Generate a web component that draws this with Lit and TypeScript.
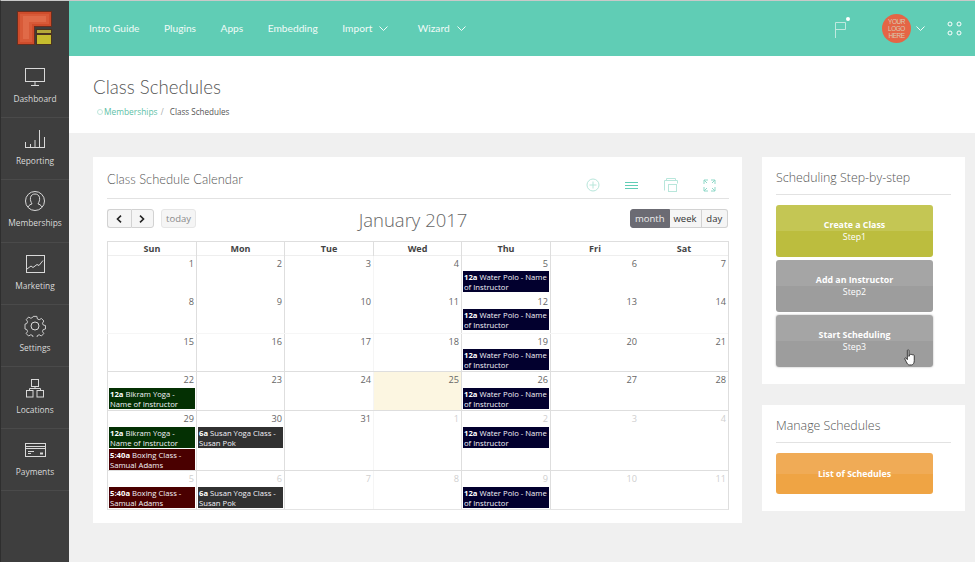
import { LitElement, html, css, svg } from "lit";
import { customElement } from "lit/decorators.js";

type Ev = { t: string; name: string; c: string };
const W: Ev = { t: "12a", name: "Water Polo - Name of Instructor", c: "navy" };
const Y: Ev = { t: "12a", name: "Bikram Yoga - Name of Instructor", c: "green" };
const B: Ev = { t: "5:40a", name: "Boxing Class - Samual Adams", c: "maroon" };
const S: Ev = { t: "6a", name: "Susan Yoga Class - Susan Pok", c: "char" };

type Cell = { d: number; off?: boolean; now?: boolean; ev?: Ev[] };
const c = (d: number, ev?: Ev[], off?: boolean, now?: boolean): Cell => ({ d, ev, off, now });

const WEEKS: { kind: string; cells: Cell[] }[] = [
  { kind: "plain", cells: [c(1), c(2), c(3), c(4), c(5, [W]), c(6), c(7)] },
  { kind: "plain", cells: [c(8), c(9), c(10), c(11), c(12, [W]), c(13), c(14)] },
  { kind: "plain faint", cells: [c(15), c(16), c(17), c(18), c(19, [W]), c(20), c(21)] },
  { kind: "line", cells: [c(22, [Y]), c(23), c(24), c(25, undefined, false, true), c(26, [W]), c(27), c(28)] },
  { kind: "line tall", cells: [c(29, [Y, B]), c(30, [S]), c(31), c(1, undefined, true), c(2, [W], true), c(3, undefined, true), c(4, undefined, true)] },
  { kind: "line", cells: [c(5, [B], true), c(6, [S], true), c(7, undefined, true), c(8, undefined, true), c(9, [W], true), c(10, undefined, true), c(11, undefined, true)] },
];

const ic = (w: number, h: number, body: unknown) =>
  html`<svg width=${w} height=${h} viewBox="0 0 ${w} ${h}" fill="none" stroke="currentColor" stroke-width="1">${body}</svg>`;

const NAV = [
  { label: "Dashboard", icon: ic(22, 20, svg`<rect x="1.500" y="1.500" width="19" height="13"/><path d="M11 14.500v3.500M7 18.500h8"/>`) },
  { label: "Reporting", icon: ic(22, 20, svg`<path d="M1.500 13v6M6.500 15v4M11 11v8M15.500 1v18M20.500 8v11M1 18.500h20"/>`) },
  { label: "Memberships", icon: ic(22, 22, svg`<circle cx="11" cy="11" r="9.500"/><path d="M8 14c-1-2-2-4-1.500-6.500C7 5 9 4 11 4s4 1 4.500 3.500C16 10 15 12 14 14M4 17c1-2 3-3 4-3M18 17c-1-2-3-3-4-3"/>`) },
  { label: "Marketing", icon: ic(22, 20, svg`<rect x="2.500" y="1.500" width="18" height="17"/><path d="M3 15l4-3 2 1.500 4-3 2 1 4-5"/>`) },
  { label: "Settings", icon: ic(22, 22, svg`<path d="M9 1.500h4l.6 2.800 2 .9 2.500-1.400 2.600 2.800-1.500 2.400.8 2 2.500.6v3.800l-2.500.6-.8 2 1.400 2.400-2.600 2.700-2.400-1.400-2 .9-.6 2.600H9l-.6-2.600-2-.9-2.400 1.400-2.700-2.700 1.500-2.400-.8-2-2-.6V10l2-.6.8-2L1.400 5l2.600-2.800 2.400 1.400 2-.9z" transform="translate(1 0) scale(.91)"/><circle cx="11" cy="11" r="4"/>`) },
  { label: "Locations", icon: ic(20, 20, svg`<rect x="6.500" y="1.500" width="7" height="7"/><rect x="1.500" y="12.500" width="6.500" height="6.500"/><rect x="12" y="12.500" width="6.500" height="6.500"/><path d="M10 8.500v2M4.500 12.500v-2h11v2"/>`) },
  { label: "Payments", icon: ic(22, 16, svg`<rect x="1.500" y="1.500" width="20" height="13"/><path d="M2 4.500h19M2 6.500h19M4 9.500h6M4 11.500h3"/><path d="M16 11.500h3" stroke-width="2"/>`) },
];

const chev = html`<svg class="chev" width="9" height="5" viewBox="0 0 9 5" fill="none" stroke="currentColor"><path d="M.5.500l4 4 4-4"/></svg>`;

@customElement("app-root")
export class AppRoot extends LitElement {
  static styles = css`
    :host { display: block; width: 975px; height: 562px; overflow: hidden; background: #f0f0f0; font-family: "Open Sans", sans-serif; color: #555; }
    * { box-sizing: border-box; }
    .shell { display: flex; height: 562px; }
    .side { width: 69px; flex: none; background: #3e3e3e; border-left: 1px solid #2e2e2e; border-top: 1px solid #c9c9c9; color: #d9d9d9; display: flex; flex-direction: column; }
    .logoBox { height: 55px; display: flex; justify-content: center; align-items: flex-start; padding: 10px 1px 0 0; }
    .nitem { height: 62.200px; border-bottom: 1px solid #4a4a4a; display: flex; flex-direction: column; align-items: center; font-size: 8.400px; line-height: 12px; padding-top: 9px; }
    .nitem .ico { height: 24px; display: flex; align-items: center; justify-content: center; }
    .nitem .lab { margin-top: 4px; }
    .main { flex: 1; min-width: 0; display: flex; flex-direction: column; }
    .top { height: 56px; background: #60cdb5; border-top: 1px solid #c9c9c9; display: flex; align-items: center; color: #f1fbf8; font-family: Lato, sans-serif; font-size: 10.200px; padding-left: 20px; }
    .links { display: flex; gap: 24.500px; align-items: center; padding-bottom: 1px; }
    .links span { display: inline-flex; align-items: center; gap: 7px; }
    .links .w { margin-left: 5px; }
    .right { margin-left: auto; display: flex; align-items: center; padding-right: 13px; }
    .flag { position: relative; width: 16px; height: 20px; margin-right: 32px; }
    .dot { position: absolute; right: 0; top: -2px; width: 4px; height: 4px; border-radius: 50%; background: #fff; }
    .avatar { width: 29px; height: 29px; border-radius: 50%; background: #e56545; display: flex; align-items: center; justify-content: center; text-align: center; font-size: 6.500px; line-height: 7px; letter-spacing: -.5px; color: #d8c9b4; font-family: "Liberation Sans", sans-serif; margin-right: 5px; }
    .right .chev { margin-right: 22px; }
    .head { height: 77px; background: #fff; padding: 19px 24px 0; }
    h1 { margin: 0; font-family: Lato, sans-serif; font-weight: 300; font-size: 18.700px; line-height: 24px; color: #555; }
    .crumb { margin-top: 7px; font-size: 8.100px; line-height: 12px; display: flex; align-items: center; color: #555; }
    .crumb .m { color: #60bfa8; font-size: 8.400px; }
    .crumb .g { width: 6px; height: 6px; border-radius: 50%; border: 1px solid #bfe6dc; margin: 0 1px 0 4px; }
    .crumb .sep { color: #aaa; margin: 0 4px 0 1px; }
    .body { display: flex; padding: 24px 10px 0 24px; gap: 20px; align-items: flex-start; }
    .card { background: #fff; }
    .cal { width: 649px; height: 366px; padding: 0 13px 0 14px; }
    .calHead { height: 42px; display: flex; align-items: center; border-bottom: 1px solid #e2e2e2; padding-top: 5px; justify-content: space-between; color: #666; }
    .calHead .t { font-family: Lato, sans-serif; font-size: 12.900px; font-weight: 300; color: #555; position: relative; top: -1px; }
    .tools { display: flex; align-items: center; gap: 25.500px; padding-right: 13px; position: relative; top: 5px; }
    .bar { display: flex; align-items: flex-start; justify-content: space-between; height: 42px; padding: 10px 1px 0 0; }
    .grp { display: flex; align-items: center; }
    .btn { height: 19px; border: 1px solid #d2d2d2; background: #f5f5f5; font-size: 9.500px; color: #333; display: flex; align-items: center; justify-content: center; padding: 0 5px; }
    .arrow { width: 23.500px; font-weight: 700; color: #222; padding: 0; }
    .arrow.l { border-radius: 3px 0 0 3px; border-right: 0; }
    .arrow.r { border-radius: 0 3px 3px 0; margin-right: 7px; }
    .arrow svg { display: block; }
    .todayBtn { width: 35px; border-radius: 3px; color: #8a8a8a; border-color: #e6e6e6; }
    .title { font-family: "Open Sans", sans-serif; font-weight: 300; font-size: 18.500px; line-height: 22px; color: #666; }
    .v1 { width: 39.500px; background: #6b6b73; border-color: #6b6b73; color: #eee; border-radius: 3px 0 0 3px; }
    .v2 { width: 32px; border-left: 0; }
    .v3 { width: 26.500px; border-left: 0; border-radius: 0 3px 3px 0; }
    .cols { display: grid; grid-template-columns: 89px 88px 89px 88px 89px 89px 89px; }
    .table { width: 622px; border-top: 1px solid #dedede; border-right: 1px solid #dedede; border-bottom: 1px solid #e4e4e4; }
    .hdr { height: 14px; font-size: 9px; line-height: 14px; font-weight: 700; text-align: center; color: #444; border-bottom: 1px solid #eee; }
    .hdr div { border-left: 1px solid #dedede; }
    .hdr div:nth-child(7) { border-left-color: transparent; }
    .week { height: 38.400px; }
    .week.faint { border-top: 1px solid #f6f6f6; }
    .week.tall { height: 60px; }
    .week.line { height: 39px; border-top: 1px solid #dedede; }
    .week.line.tall { height: 60px; }
    .cell { border-left: 1px solid #dedede; min-width: 0; height: 100%; overflow: hidden; }
    .cell:nth-child(4) { border-left-color: #f5f5f5; }
    .cell:nth-child(7) { border-left-color: transparent; }
    .cell.now { background: #fcf6e1; }
    .num { text-align: right; font-size: 9.200px; line-height: 13px; padding: 1px 2px 0 0; color: #666; }
    .off .num { color: #cfcfcf; }
    .ev { margin: 1px 1px 0 1px; font-size: 7.700px; line-height: 10px; padding: 1px 1px 0; color: #f2f2f8; height: 21px; overflow: hidden; }
    .line .ev { margin-top: 2px; }
    .line .ev + .ev { margin-top: 1px; }
    .ev b { color: #fff; font-weight: 700; }
    .navy { background: #02002e; }
    .green { background: #043003; }
    .maroon { background: #4a0000; }
    .char { background: #313131; }
    .aside { display: flex; flex-direction: column; gap: 21px; width: 203px; }
    .steps { height: 227px; padding: 0 14px; }
    .manage { height: 106px; padding: 0 14px; }
    .ah { height: 38px; border-bottom: 1px solid #e2e2e2; font-weight: 300; font-size: 12.400px; color: #555; padding-top: 13px; line-height: 16px; white-space: nowrap; }
    .stack { display: flex; flex-direction: column; gap: 3px; padding-top: 10px; }
    .sbtn { width: 157px; height: 52px; border-radius: 3px; color: #fff; font-size: 8.800px; line-height: 11.500px; text-align: center; display: flex; flex-direction: column; padding-top: 15px; position: relative; }
    .sbtn b { font-weight: 700; }
    .sbtn.active { box-shadow: 0 0 2px rgba(0,0,0,.35); }
    .olive { background: linear-gradient(#c4c654 0 50%, #bcbd3e 50%); }
    .grey { background: linear-gradient(#a5a5a5 0 50%, #9d9d9d 50%); }
    .orange { background: linear-gradient(#f0ab56 0 50%, #efa444 50%); height: 41px; padding-top: 16px; }
    .hand { position: absolute; right: 17px; bottom: 1px; }
  `;

  render() {
    return html`<div class="shell">
      <nav class="side">
        <div class="logoBox">
          <svg width="35" height="34" viewBox="0 0 35 34">
            <path d="M0 0h35v16H18v18H0z" fill="#6a2e1e"/>
            <path d="M1 1h33v14H17v18H1z" fill="#cf4c2b"/>
            <path d="M3 3h29v10H15v18H3z" fill="#d85a38"/>
            <path d="M6 5h23v6H12v17H6z" fill="#e06a48"/>
            <rect x="19" y="18" width="16" height="16" fill="#4a3320"/>
            <rect x="20" y="19" width="14" height="3" fill="#b5a93a"/>
            <rect x="20" y="24" width="14" height="9" fill="#c6bd2e"/>
          </svg>
        </div>
        ${NAV.map((n) => html`<div class="nitem"><div class="ico">${n.icon}</div><div class="lab">${n.label}</div></div>`)}
      </nav>
      <div class="main">
        <header class="top">
          <div class="links">
            <span>Intro Guide</span><span>Plugins</span><span>Apps</span><span>Embedding</span>
            <span>Import ${chev}</span><span class="w">Wizard ${chev}</span>
          </div>
          <div class="right">
            <div class="flag">
              <svg width="14" height="20" viewBox="0 0 14 20" fill="none" stroke="#bfe9df"><path d="M1.500 19V3.500h10v7h-10"/></svg>
              <i class="dot"></i>
            </div>
            <div class="avatar">YOUR<br/>LOGO<br/>HERE</div>
            ${chev}
            <svg width="15" height="15" viewBox="0 0 15 15" fill="none" stroke="#fff"><circle cx="3" cy="3" r="2"/><circle cx="12" cy="3" r="2"/><circle cx="3" cy="12" r="2"/><circle cx="12" cy="12" r="2"/></svg>
          </div>
        </header>
        <section class="head">
          <h1>Class Schedules</h1>
          <div class="crumb"><i class="g"></i><span class="m">Memberships</span><span class="sep">&nbsp;/</span><span>&nbsp;Class Schedules</span></div>
        </section>
        <div class="body">
          <section class="card cal">
            <div class="calHead">
              <span class="t">Class Schedule Calendar</span>
              <div class="tools">
                <svg width="14" height="14" viewBox="0 0 14 14" fill="none" stroke="#b8e6db"><circle cx="7" cy="7" r="6"/><path d="M7 3.500v7M3.500 7h7"/></svg>
                <svg width="13" height="9" viewBox="0 0 13 9" fill="none" stroke="#60cdb5"><path d="M0 1.500h13M0 4.500h13M0 7.500h13"/></svg>
                <svg width="14" height="14" viewBox="0 0 14 14" fill="none" stroke="#b8e6db"><path d="M2.500 2.500v-2h9v2M.5 12.500v-10h13v3"/><rect x="4.500" y="6.500" width="8" height="7"/></svg>
                <svg width="13" height="13" viewBox="0 0 13 13" fill="none" stroke="#8fd8c8"><path d="M1 5V1h4M1 1l3 3M8 1h4v4M12 1L9 4M1 8v4h4M1 12l3-3M12 8v4H8M12 12L9 9"/></svg>
              </div>
            </div>
            <div class="bar">
              <div class="grp">
                <div class="btn arrow l"><svg width="6" height="8" viewBox="0 0 6 8" fill="none" stroke="#222" stroke-width="1.600"><path d="M5 .7L1.500 4 5 7.300"/></svg></div>
                <div class="btn arrow r"><svg width="6" height="8" viewBox="0 0 6 8" fill="none" stroke="#222" stroke-width="1.600"><path d="M1 .7L4.500 4 1 7.300"/></svg></div>
                <div class="btn todayBtn">today</div>
              </div>
              <div class="title">January 2017</div>
              <div class="grp">
                <div class="btn v1">month</div><div class="btn v2">week</div><div class="btn v3">day</div>
              </div>
            </div>
            <div class="table">
              <div class="cols hdr">${["Sun", "Mon", "Tue", "Wed", "Thu", "Fri", "Sat"].map((d) => html`<div>${d}</div>`)}</div>
              ${WEEKS.map((w) => html`<div class="cols week ${w.kind}">
                ${w.cells.map((cell) => html`<div class="cell ${cell.off ? "off" : ""} ${cell.now ? "now" : ""}">
                  <div class="num">${cell.d}</div>
                  ${(cell.ev || []).map((e) => html`<div class="ev ${e.c}"><b>${e.t}</b> ${e.name}</div>`)}
                </div>`)}
              </div>`)}
            </div>
          </section>
          <aside class="aside">
            <section class="card steps">
              <div class="ah">Scheduling Step-by-step</div>
              <div class="stack">
                <div class="sbtn olive"><b>Create a Class</b><span>Step1</span></div>
                <div class="sbtn grey"><b>Add an Instructor</b><span>Step2</span></div>
                <div class="sbtn grey active"><b>Start Scheduling</b><span>Step3</span>
                  <svg class="hand" width="12" height="17" viewBox="0 0 11 16"><path d="M3 1.500c0-1 1.500-1 1.500 0V7l.5-1.500c.5-.7 1.300-.5 1.500 0 .5-.7 1.300-.5 1.500.2.500-.4 1.500-.2 1.500.5V11c0 2-1 4-2.500 4H5c-1.500 0-2-1-3-3L.7 9.500C.3 8.500 1.300 8 2 8.700L3 10z" fill="#fff" stroke="#222" stroke-width=".8"/></svg>
                </div>
              </div>
            </section>
            <section class="card manage">
              <div class="ah">Manage Schedules</div>
              <div class="stack"><div class="sbtn orange"><b>List of Schedules</b></div></div>
            </section>
          </aside>
        </div>
      </div>
    </div>`;
  }
}
